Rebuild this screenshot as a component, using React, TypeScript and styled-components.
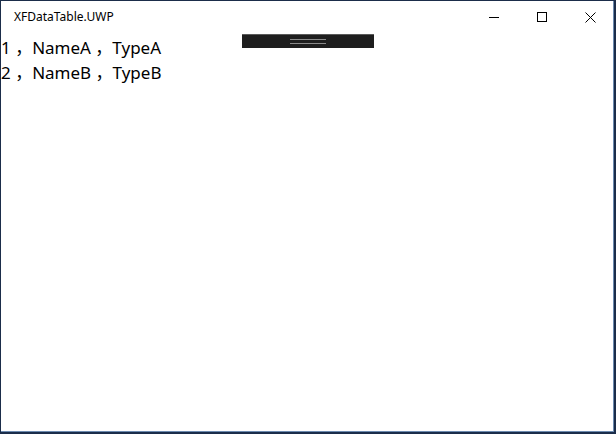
import React from "react";
import styled, { createGlobalStyle } from "styled-components";

const GlobalStyle = createGlobalStyle`
  html, body {
    margin: 0;
    padding: 0;
    background: #ffffff;
  }
  #root {
    width: 616px;
    height: 434px;
  }
`;

const Window = styled.div`
  position: relative;
  box-sizing: border-box;
  width: 616px;
  height: 434px;
  display: flex;
  flex-direction: column;
  background: #ffffff;
  border-top: 1px solid #1b2d4a;
  border-left: 1px solid #1b2d4a;
  border-right: 2px solid #1b2d4a;
  border-bottom: 2px solid #1b2d4a;
  box-shadow: inset -1px -1px 0 #6d8bb0;
  font-family: "Noto Sans", "Segoe UI", sans-serif;
  color: #000000;
`;

const TitleBar = styled.div`
  height: 32px;
  display: flex;
  align-items: center;
  flex-shrink: 0;
`;

const Title = styled.div`
  flex: 1;
  padding-left: 13px;
  font-size: 12px;
  line-height: 32px;
`;

const CaptionButton = styled.div`
  width: 48px;
  height: 32px;
  display: flex;
  align-items: center;
  justify-content: center;
  color: #000000;
`;

const Content = styled.div`
  flex: 1;
  padding: 2px 0 0 0;
`;

const Row = styled.div`
  font-family: "Noto Sans", "Noto Sans CJK JP", sans-serif;
  font-size: 17px;
  line-height: 25px;
  white-space: pre;
`;

const DebugBar = styled.div`
  position: absolute;
  top: 33px;
  left: 241px;
  width: 132px;
  height: 13px;
  background: #1e1e1e;
  border-top: 1px solid #5a5a5a;
  display: flex;
  align-items: center;
  justify-content: center;
`;

const Grip = styled.div`
  width: 36px;
  height: 3px;
  border-top: 1px solid #8a8a8a;
  border-bottom: 1px solid #8a8a8a;
`;

const rows = [
  { id: 1, name: "NameA", type: "TypeA" },
  { id: 2, name: "NameB", type: "TypeB" },
];

export default function App() {
  return (
    <>
      <GlobalStyle />
      <Window>
        <TitleBar>
          <Title>XFDataTable.UWP</Title>
          <CaptionButton>
            <svg width="10" height="10" viewBox="0 0 10 10">
              <line x1="0" y1="5.5" x2="10" y2="5.5" stroke="#000" strokeWidth="1" />
            </svg>
          </CaptionButton>
          <CaptionButton>
            <svg width="10" height="10" viewBox="0 0 10 10">
              <rect x="0.5" y="0.5" width="9" height="9" fill="none" stroke="#000" strokeWidth="1" />
            </svg>
          </CaptionButton>
          <CaptionButton>
            <svg width="11" height="11" viewBox="0 0 11 11">
              <path d="M0.5 0.5 L10.5 10.5 M10.5 0.5 L0.5 10.5" stroke="#000" strokeWidth="1" />
            </svg>
          </CaptionButton>
        </TitleBar>
        <Content>
          {rows.map((r) => (
            <Row key={r.id}>{`${r.id} ，${r.name} ，${r.type}`}</Row>
          ))}
        </Content>
        <DebugBar>
          <Grip />
        </DebugBar>
      </Window>
    </>
  );
}
